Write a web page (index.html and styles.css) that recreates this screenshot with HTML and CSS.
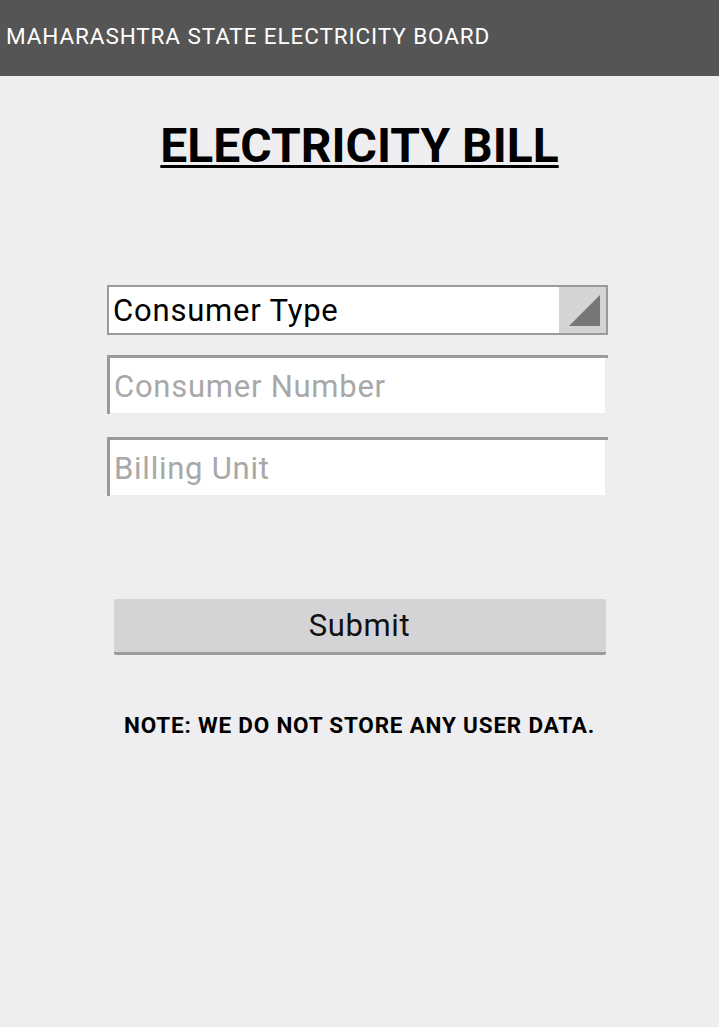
FILE: index.html
```html
<!DOCTYPE html>
<html>
<head>
<meta charset="utf-8">
<link rel="stylesheet" href="styles.css">
</head>
<body>
<header class="bar"><span class="bar-title">MAHARASHTRA STATE ELECTRICITY BOARD</span></header>
<main class="content">
  <h1 class="title">ELECTRICITY BILL</h1>
  <div class="form">
    <div class="spinner">
      <span class="spinner-text">Consumer Type</span>
      <span class="spinner-arrow"><svg width="31" height="31" viewBox="0 0 31 31"><polygon points="31,0 31,31 0,31" fill="#777"/></svg></span>
    </div>
    <div class="edit"><span class="hint">Consumer Number</span></div>
    <div class="edit"><span class="hint">Billing Unit</span></div>
  </div>
  <div class="btn">Submit</div>
  <p class="note">NOTE: WE DO NOT STORE ANY USER DATA.</p>
</main>
</body>
</html>
```
FILE: styles.css
```css
html, body { margin: 0; padding: 0; }
body { background: #eeeef0; font-family: Roboto, "Noto Sans", sans-serif; width: 719px; height: 1027px; overflow: hidden; }
.bar { height: 76px; background: #555555; display: flex; align-items: center; padding-left: 6px; }
.bar-title { color: #fff; font-size: 22.5px; letter-spacing: 0.9px; white-space: nowrap; margin-top: -4px; }
.content { display: flex; flex-direction: column; align-items: center; }
.title { margin: 44px 0 0; font-size: 48px; font-weight: bold; line-height: 52px; text-decoration: underline; text-decoration-thickness: 3px; text-underline-offset: 3px; color: #000; white-space: nowrap; }
.form { margin: 113px 4px 0 0; width: 501px; display: flex; flex-direction: column; }
.spinner { height: 50px; box-sizing: border-box; border: 2px solid #9a9a9a; background: #fff; display: flex; align-items: center; justify-content: space-between; }
.spinner-text { font-size: 31px; letter-spacing: 0.8px; color: #000; padding-left: 4px; padding-bottom: 0; }
.spinner-arrow { width: 47px; height: 46px; background: #d4d4d4; display: flex; align-items: flex-end; justify-content: flex-end; box-sizing: border-box; padding: 0 6px 7px 0; }
.spinner-arrow svg { display: block; }
.edit { margin-top: 20px; height: 59px; box-sizing: border-box; border-top: 3px solid #9a9a9a; border-left: 3px solid #9a9a9a; background: linear-gradient(#fff, #fff) no-repeat 0 0 / 495px 55px; display: flex; align-items: center; }
.edit + .edit { margin-top: 23px; }
.hint { font-size: 31px; letter-spacing: 0.75px; color: #a8a8a8; padding-left: 4px; padding-top: 0; }
.btn { margin-top: 103px; width: 492px; height: 56px; box-sizing: border-box; background: #d4d4d6; border-bottom: 3px solid #9c9c9c; border-radius: 2px; display: flex; align-items: center; justify-content: center; font-size: 31px; letter-spacing: 0.6px; color: #111; padding-bottom: 0; }
.note { margin: 57px 0 0; font-size: 22.5px; letter-spacing: 0.8px; font-weight: bold; color: #000; }
```
